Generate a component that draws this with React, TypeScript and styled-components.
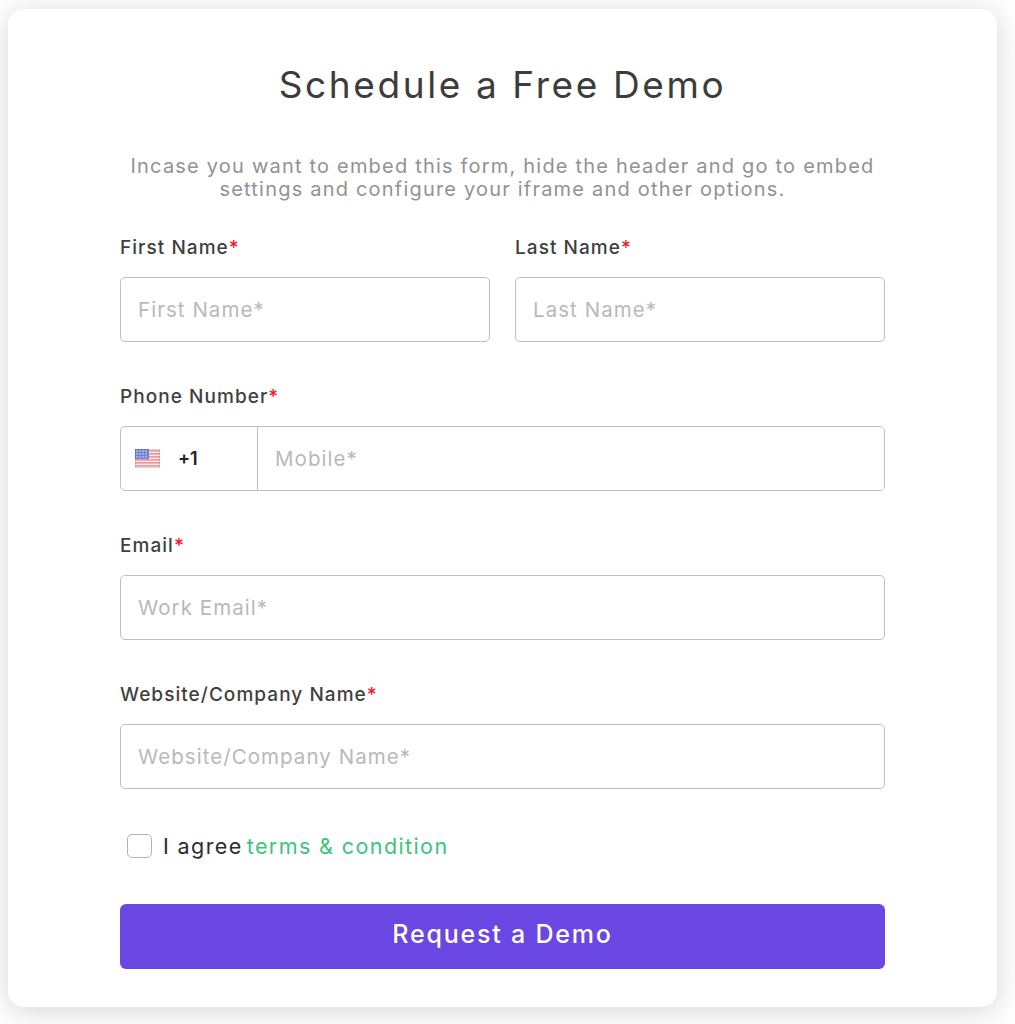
import * as React from 'react';
import styled, { createGlobalStyle } from 'styled-components';

const GlobalStyle = createGlobalStyle`
    html, body {
        margin: 0;
        background: #ffffff;
    }
    body {
        padding: 9px 18px 17px 8px;
        font-family: "Inter", "Liberation Sans", sans-serif;
    }
    * { box-sizing: border-box; }
`;

const Card = styled.div`
    width: 989px;
    height: 998px;
    background: #fff;
    border-radius: 16px;
    box-shadow: 0 4px 30px rgba(0, 0, 0, 0.17);
    padding: 52px 112px 38px 112px;
`;

const Title = styled.h1`
    margin: 0;
    height: 48px;
    line-height: 48px;
    font-size: 37px;
    font-weight: 400;
    color: #3c3c3c;
    text-align: center;
    letter-spacing: 2.6px;
`;

const Subtitle = styled.p`
    margin: 46px 0 0;
    font-size: 20px;
    line-height: 23px;
    color: #929292;
    text-align: center;
    letter-spacing: 1.2px;
`;

const Form = styled.form`
    margin-top: 35px;
    display: flex;
    flex-direction: column;
    gap: 43px;
`;

const Row = styled.div`
    display: flex;
    gap: 25px;
`;

const Field = styled.div`
    flex: 1;
    min-width: 0;
`;

const Label = styled.label`
    display: block;
    height: 24px;
    line-height: 24px;
    margin: 0 0 17px 0;
    font-size: 19px;
    font-weight: 450;
    letter-spacing: 1.05px;
    color: #3f3f3f;
`;

const Req = styled.span`
    color: #f5142a;
`;

const Input = styled.input`
    display: block;
    width: 100%;
    height: 65px;
    padding: 0 17px;
    border: 1px solid #bfbfbf;
    border-radius: 5px;
    background: #fff;
    font-family: inherit;
    font-size: 20.5px;
    letter-spacing: 1.05px;
    outline: none;
    &::placeholder {
        color: #b9b9b9;
        opacity: 1;
    }
`;

const PhoneBox = styled.div`
    display: flex;
    height: 65px;
    border: 1px solid #bfbfbf;
    border-radius: 5px;
    overflow: hidden;
`;

const Dial = styled.div`
    width: 137px;
    flex: none;
    display: flex;
    align-items: center;
    gap: 18px;
    padding-left: 14px;
    border-right: 1px solid #bfbfbf;
    font-size: 18px;
    font-weight: 600;
    color: #222;
`;

const PhoneInput = styled(Input)`
    flex: 1;
    height: 100%;
    border: none;
    border-radius: 0;
`;

const Agree = styled.div`
    display: flex;
    align-items: center;
    gap: 11px;
    height: 26px;
    margin: 1px 0 0 7px;
    font-size: 21.5px;
    letter-spacing: 1.4px;
    color: #2c2c2c;
`;

const Box = styled.input`
    appearance: none;
    width: 25px;
    height: 24px;
    margin: 0;
    border: 1px solid #b4b4b4;
    border-radius: 5px;
    background: #fff;
`;

const Terms = styled.a`
    color: #3cc47c;
    margin-left: 4px;
`;

const Submit = styled.button`
    display: block;
    width: 100%;
    height: 65px;
    margin-top: 2px;
    padding: 0 0 6px;
    border: none;
    border-radius: 6px;
    background: #6a46e2;
    color: #fff;
    font-family: inherit;
    font-size: 25px;
    font-weight: 500;
    letter-spacing: 1.8px;
`;

function UsFlag(): JSX.Element {
    return (
        <svg width="25" height="19" viewBox="0 0 25 19">
            <rect width="25" height="19" fill="#f8eeee" />
            {[0, 3, 6, 9, 12, 15].map((y) => (
                <rect key={y} y={y + 1} width="25" height="1.7" fill="#f0979b" />
            ))}
            <rect width="14" height="10" fill="#6f82d6" />
            {[2, 5, 8].map((y) =>
                [2, 5, 8, 11].map((x) => (
                    <circle key={`${x}-${y}`} cx={x} cy={y} r="0.8" fill="#dfe4fa" />
                ))
            )}
            <rect x="0.25" y="0.25" width="24.5" height="18.5" fill="none" stroke="#000" strokeOpacity="0.2" strokeWidth="0.5" />
        </svg>
    );
}

export default function App(): JSX.Element {
    return (
        <React.Fragment>
            <GlobalStyle />
            <Card>
                <Title>Schedule a Free Demo</Title>
                <Subtitle>
                    Incase you want to embed this form, hide the header and go to embed<br />
                    settings and configure your iframe and other options.
                </Subtitle>
                <Form>
                    <Row>
                        <Field>
                            <Label>First Name<Req>*</Req></Label>
                            <Input placeholder="First Name*" />
                        </Field>
                        <Field>
                            <Label>Last Name<Req>*</Req></Label>
                            <Input placeholder="Last Name*" />
                        </Field>
                    </Row>
                    <Field>
                        <Label>Phone Number<Req>*</Req></Label>
                        <PhoneBox>
                            <Dial><UsFlag />+1</Dial>
                            <PhoneInput placeholder="Mobile*" />
                        </PhoneBox>
                    </Field>
                    <Field>
                        <Label>Email<Req>*</Req></Label>
                        <Input placeholder="Work Email*" />
                    </Field>
                    <Field>
                        <Label>Website/Company Name<Req>*</Req></Label>
                        <Input placeholder="Website/Company Name*" />
                    </Field>
                    <Agree>
                        <Box type="checkbox" />
                        <span>I agree<Terms>terms &amp; condition</Terms></span>
                    </Agree>
                    <Submit type="button">Request a Demo</Submit>
                </Form>
            </Card>
        </React.Fragment>
    );
}
